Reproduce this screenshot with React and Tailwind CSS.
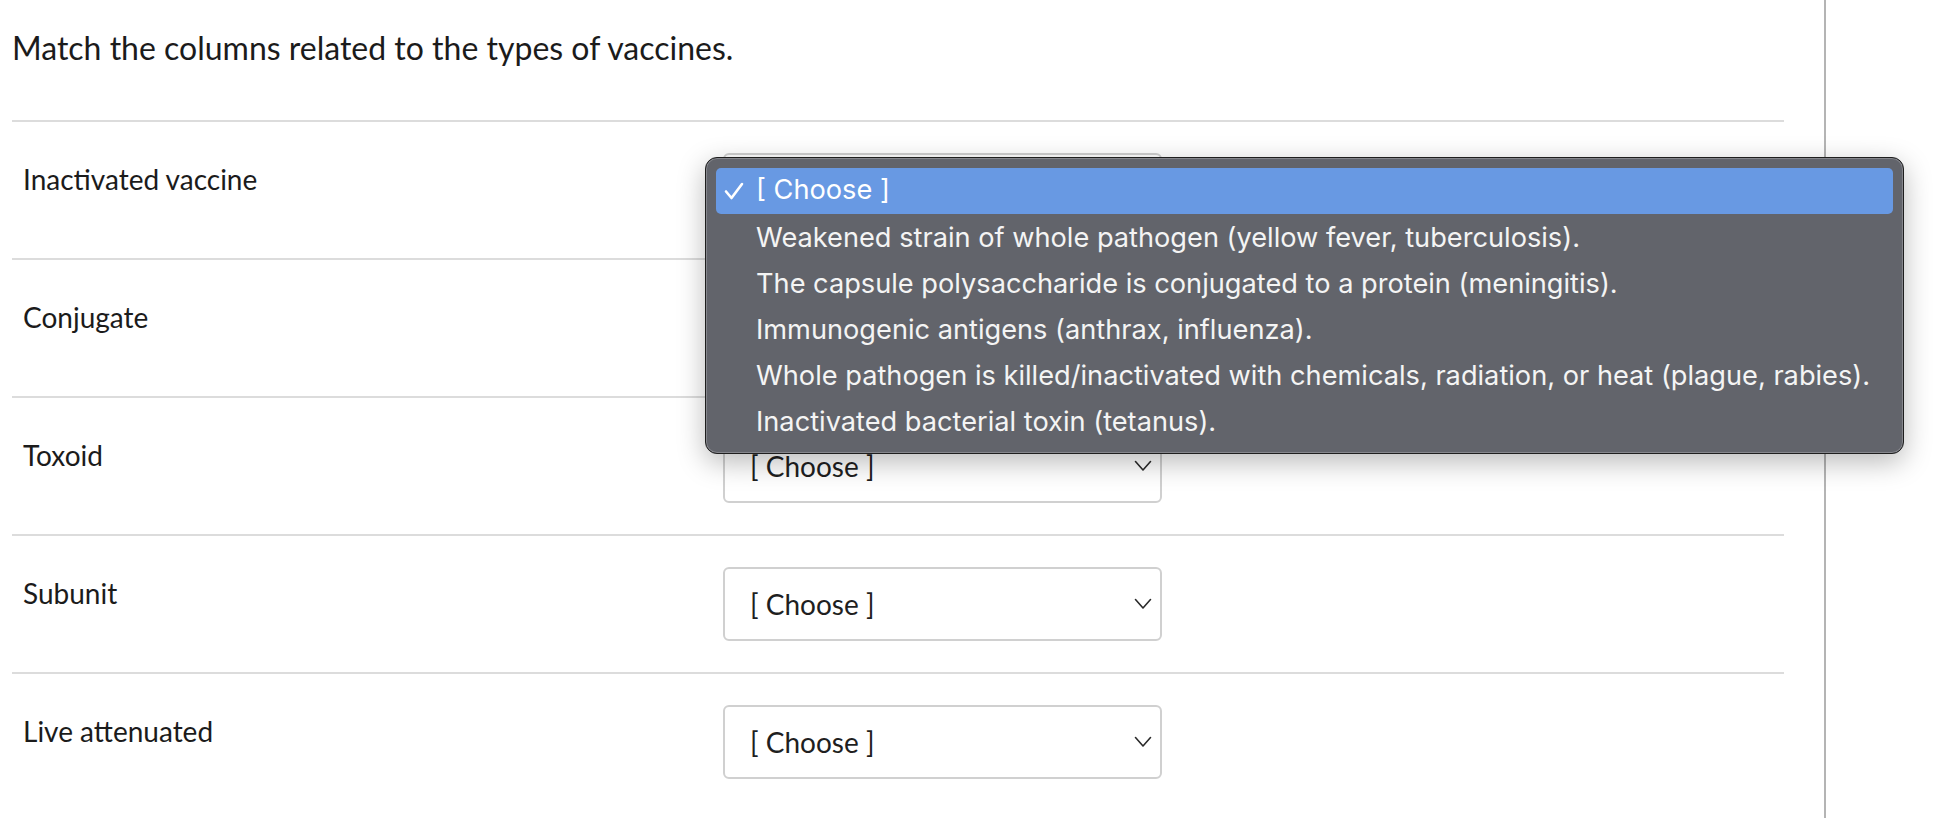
const rows = ['Inactivated vaccine', 'Conjugate', 'Toxoid', 'Subunit', 'Live attenuated']

const options = [
  'Weakened strain of whole pathogen (yellow fever, tuberculosis).',
  'The capsule polysaccharide is conjugated to a protein (meningitis).',
  'Immunogenic antigens (anthrax, influenza).',
  'Whole pathogen is killed/inactivated with chemicals, radiation, or heat (plague, rabies).',
  'Inactivated bacterial toxin (tetanus).',
]

function FakeSelect() {
  return (
    <div className="w-[439px] h-[74px] shrink-0 border-2 border-[#d0d0d0] rounded-md bg-white flex items-center justify-between pl-[25px] pr-[7px]">
      <span className="text-[28px] text-[#1f1f1f]">[ Choose ]</span>
      <svg width="18" height="12" viewBox="0 0 18 12" fill="none" className="mr-[1px]">
        <path d="M1.5 1.5 L9 10 L16.5 1.5" stroke="#2a2a2a" strokeWidth="1.6" strokeLinecap="round" strokeLinejoin="round" />
      </svg>
    </div>
  )
}

export default function App() {
  return (
    <div className="relative h-[818px] w-full bg-white overflow-hidden font-['Lato',sans-serif]">
      <div className="w-[1826px] h-full border-r-2 border-[#b4b4b4] pl-[12px] pr-[40px]">
        <h1 className="text-[32px] leading-[48px] text-[#1b1b1b] pt-[24px] pb-[48px]">
          Match the columns related to the types of vaccines.
        </h1>

        {rows.map((label) => (
          <div key={label} className="border-t-2 border-[#dcdcdc] pt-[31px] pb-[31px] flex items-start">
            <div className="w-[711px] shrink-0 pl-[11px] pt-[5px] text-[28px] leading-[42px] text-[#1b1b1b]">{label}</div>
            <FakeSelect />
          </div>
        ))}
      </div>

      {/* open dropdown menu */}
      <div className="absolute left-[705px] top-[157px] w-[1199px] h-[297px] rounded-[12px] border border-[#1e1e1e] bg-[#62646b] px-[10px] pt-[10px] pb-[10px] shadow-[inset_0_0_0_1px_#85868c,0_8px_28px_rgba(0,0,0,0.28)] font-['Inter',sans-serif] text-[27.2px] text-[#f4f4f4]">
        <div className="h-[46px] rounded-[5px] bg-[#6899e3] flex items-center pl-[8px] pb-[2px] text-white">
          <svg width="20" height="18" viewBox="0 0 20 18" fill="none" className="mr-[12px] mt-[2px]">
            <path d="M2 9.5 L7.5 16 L18 2" stroke="#ffffff" strokeWidth="2.6" strokeLinecap="round" strokeLinejoin="round" />
          </svg>
          <span>[ Choose ]</span>
        </div>
        {options.map((o) => (
          <div key={o} className="h-[46px] flex items-center pl-[40px] pt-[2px]">{o}</div>
        ))}
      </div>
    </div>
  )
}
